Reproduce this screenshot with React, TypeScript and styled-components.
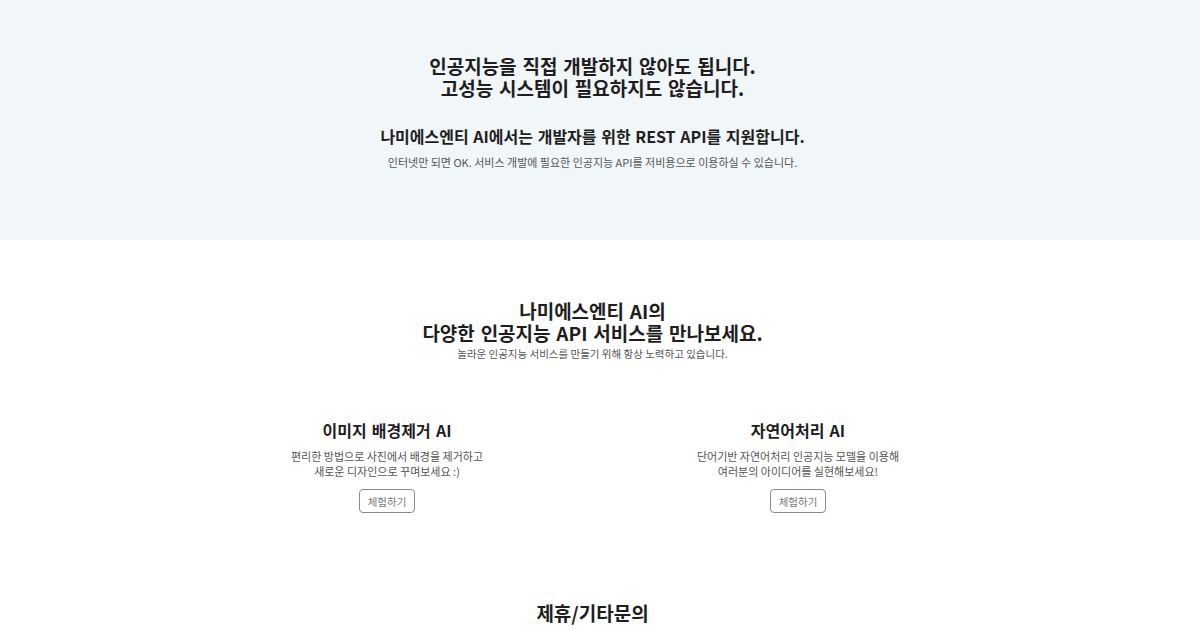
import * as React from 'react'
import styled, { createGlobalStyle } from 'styled-components'

const Global = createGlobalStyle`
  html, body {
    margin: 0;
    padding: 0;
    background: #ffffff;
    font-family: "Noto Sans CJK KR", "Noto Sans", sans-serif;
    color: #212529;
  }
  * { box-sizing: border-box; }
`

const Hero = styled.section`
  background: #f1f6f9;
  height: 240px;
`

const Inner = styled.div`
  padding-right: 15px;
  display: flex;
  flex-direction: column;
  align-items: center;
  text-align: center;
`

const BigTitle = styled.h2<{ $top: number }>`
  margin: ${p => p.$top}px 0 0;
  font-size: 19px;
  line-height: 22px;
  font-weight: 700;
  word-spacing: 1.5px;
  color: #1e1e1e;
`

const SubTitle = styled.h3`
  margin: 25px 0 0;
  font-size: 16px;
  line-height: 24px;
  font-weight: 700;
  word-spacing: 1px;
  color: #1e1e1e;
`

const Small = styled.p<{ $top: number; $size: number }>`
  margin: ${p => p.$top}px 0 0;
  font-size: ${p => p.$size}px;
  line-height: 16px;
  color: #555;
`

const Services = styled.section`
  padding-top: 60px;
`

const Cards = styled.div`
  display: grid;
  grid-template-columns: 411px 411px;
  margin-top: 57px;
`

const Card = styled.div`
  display: flex;
  flex-direction: column;
  align-items: center;
`

const CardTitle = styled.h4`
  margin: 0;
  font-size: 16px;
  line-height: 22px;
  font-weight: 700;
  word-spacing: 1.5px;
  color: #1e1e1e;
`

const CardDesc = styled.p`
  margin: 7.5px 0 0;
  font-size: 11px;
  line-height: 15px;
  color: #555;
`

const TryButton = styled.button`
  margin-top: 10.5px;
  height: 24px;
  width: 56px;
  padding: 0;
  border: 1px solid #8a8a8a;
  border-radius: 4px;
  background: #fff;
  color: #777;
  font-family: inherit;
  font-size: 10.5px;
`

const Footer = styled.h2`
  margin: 88px 0 0;
  font-size: 19px;
  line-height: 24px;
  font-weight: 700;
  color: #1e1e1e;
`

const services = [
  {
    title: '이미지 배경제거 AI',
    lines: ['편리한 방법으로 사진에서 배경을 제거하고', '새로운 디자인으로 꾸며보세요 :)'],
  },
  {
    title: '자연어처리 AI',
    lines: ['단어기반 자연어처리 인공지능 모델을 이용해', '여러분의 아이디어를 실현해보세요!'],
  },
]

export default function App() {
  return (
    <>
      <Global />
      <Hero>
        <Inner>
          <BigTitle $top={55}>
            인공지능을 직접 개발하지 않아도 됩니다.
            <br />
            고성능 시스템이 필요하지도 않습니다.
          </BigTitle>
          <SubTitle>나미에스엔티 AI에서는 개발자를 위한 REST API를 지원합니다.</SubTitle>
          <Small $top={6} $size={11}>
            인터넷만 되면 OK. 서비스 개발에 필요한 인공지능 API를 저비용으로 이용하실 수 있습니다.
          </Small>
        </Inner>
      </Hero>
      <Services>
        <Inner>
          <BigTitle $top={0}>
            나미에스엔티 AI의
            <br />
            다양한 인공지능 API 서비스를 만나보세요.
          </BigTitle>
          <Small $top={2} $size={10.5}>
            놀라운 인공지능 서비스를 만들기 위해 항상 노력하고 있습니다.
          </Small>
          <Cards>
            {services.map(s => (
              <Card key={s.title}>
                <CardTitle>{s.title}</CardTitle>
                <CardDesc>
                  {s.lines[0]}
                  <br />
                  {s.lines[1]}
                </CardDesc>
                <TryButton>체험하기</TryButton>
              </Card>
            ))}
          </Cards>
          <Footer>제휴/기타문의</Footer>
        </Inner>
      </Services>
    </>
  )
}
